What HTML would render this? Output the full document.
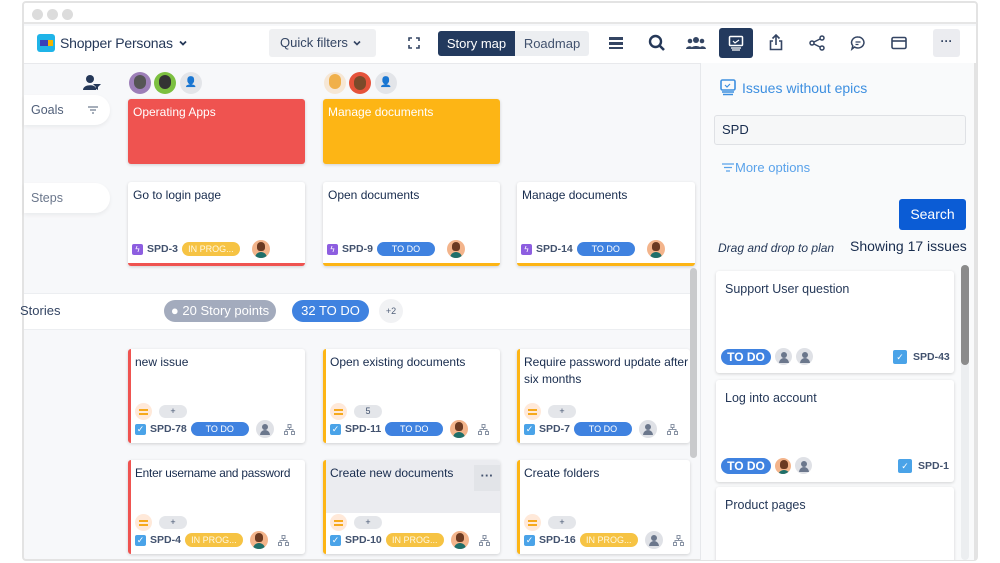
<!DOCTYPE html>
<html><head><meta charset="utf-8"><style>
*{box-sizing:border-box;margin:0;padding:0}
html,body{width:1000px;height:563px;overflow:hidden}
body{background:#fff;font-family:"Liberation Sans",sans-serif;position:relative;color:#172b4d}
.a{position:absolute}
.win{left:22px;top:1px;width:956px;height:560px;border:2px solid #e3e3e3;border-radius:4px;background:#f7f8fa;overflow:hidden}
.card{position:absolute;background:#fff;border-radius:3px;box-shadow:0 1px 3px rgba(0,0,0,.16)}
.t{position:absolute;left:5px;top:7px;font-size:12px;color:#172b4d;line-height:17px;white-space:nowrap}
.pill{display:inline-block;height:14px;border-radius:7px;color:#fff;font-size:9px;line-height:14px;text-align:center}
.todo{background:#3f82e0;width:58px}
.prog{background:#f6c343;color:#fff8e0;width:58px}
.id{font-size:10.5px;font-weight:bold;color:#42526e}
.cb{display:inline-block;width:11px;height:11px;background:#4aa3e8;border-radius:2px;color:#fff;font-size:9px;line-height:11px;text-align:center;vertical-align:middle}
.row{position:absolute;left:5px;display:flex;align-items:center;gap:4px}
.pri{width:17px;height:17px;border-radius:50%;background:#ffe9d9;position:relative}
.pri:before,.pri:after{content:"";position:absolute;left:4px;width:9px;height:2px;background:#f6a91c}
.pri:before{top:6px}.pri:after{top:10px}
.plus{width:28px;height:13px;border-radius:7px;background:#e4e6ea;font-size:9px;text-align:center;line-height:13px;color:#42526e;margin-left:3px}
.av{width:18px;height:18px;border-radius:50%;background:#f3b48b;position:relative;overflow:hidden}
.av:before{content:"";position:absolute;left:5px;top:2px;width:8px;height:9px;border-radius:4px 4px 3px 3px;background:#6b3a22}
.av:after{content:"";position:absolute;left:3px;top:12px;width:12px;height:8px;border-radius:6px 6px 0 0;background:#1f6f6a}
.ua{width:18px;height:18px;border-radius:50%;background:#dfe1e6;position:relative}
.ua:before{content:"";position:absolute;left:6px;top:4px;width:6px;height:6px;border-radius:50%;background:#6b778c}
.ua:after{content:"";position:absolute;left:4px;top:10px;width:10px;height:5px;border-radius:5px 5px 0 0;background:#6b778c}
</style></head><body>
<svg width="0" height="0" style="position:absolute"><defs><symbol id="tr" viewBox="0 0 11 11"><rect x="4" y="0.5" width="3" height="3" fill="none" stroke="#8993a4"/><rect x="0.5" y="7.5" width="3" height="3" fill="none" stroke="#8993a4"/><rect x="7.5" y="7.5" width="3" height="3" fill="none" stroke="#8993a4"/><path d="M5.5 3.5v2M2 7.5v-2h7v2" stroke="#8993a4" fill="none"/></symbol></defs></svg>
<div class="a win">
 <div class="a" style="left:0;top:0;width:956px;height:21px;background:#fff;border-bottom:2px solid #e6e6e6"></div>
 <div class="a" style="left:8px;top:6px;width:11px;height:11px;border-radius:50%;background:#dcdcdc"></div>
 <div class="a" style="left:23px;top:6px;width:11px;height:11px;border-radius:50%;background:#dcdcdc"></div>
 <div class="a" style="left:38px;top:6px;width:11px;height:11px;border-radius:50%;background:#dcdcdc"></div>
 <div class="a" style="left:0;top:23px;width:956px;height:38px;background:#fff;border-bottom:1px solid #e8e9ec"></div>
</div>
<div class="a" style="left:37px;top:34px;width:18px;height:18px;border-radius:3px;background:#1fb4e8"></div>
<div class="a" style="left:40px;top:40px;width:8px;height:6px;background:#3a3fb8"></div>
<div class="a" style="left:48px;top:40px;width:5px;height:6px;background:#f4b400"></div>
<div class="a" style="left:60px;top:35px;font-size:14px;color:#253858;letter-spacing:-0.2px">Shopper Personas</div>
<svg class="a" style="left:178px;top:38px" width="10" height="10" viewBox="0 0 10 10"><path d="M2 3.5L5 6.5 8 3.5" stroke="#253858" stroke-width="1.8" fill="none"/></svg>
<div class="a" style="left:269px;top:29px;width:107px;height:28px;background:#eff0f2;border-radius:3px;font-size:13px;color:#344563;line-height:28px;padding-left:11px">Quick filters</div>
<svg class="a" style="left:352px;top:38px" width="10" height="10" viewBox="0 0 10 10"><path d="M2 3.5L5 6.5 8 3.5" stroke="#344563" stroke-width="1.6" fill="none"/></svg>
<svg class="a" style="left:408px;top:37px" width="12" height="12" viewBox="0 0 12 12"><path d="M1 4V1h3M8 1h3v3M11 8v3H8M4 11H1V8" stroke="#344563" stroke-width="1.6" fill="none"/></svg>
<div class="a" style="left:438px;top:31px;width:77px;height:25px;background:#233a5e;border-radius:3px 0 0 3px;color:#fff;font-size:13px;line-height:25px;text-align:center">Story map</div>
<div class="a" style="left:515px;top:31px;width:74px;height:25px;background:#eceef1;border-radius:0 3px 3px 0;color:#42526e;font-size:13px;line-height:25px;text-align:center">Roadmap</div>
<svg class="a" style="left:608px;top:35px" width="16" height="16" viewBox="0 0 16 16"><rect x="1" y="2" width="14" height="3" fill="#344563"/><rect x="1" y="7" width="14" height="3" fill="#344563"/><rect x="1" y="12" width="14" height="2" fill="#344563"/></svg>
<svg class="a" style="left:648px;top:34px" width="18" height="18" viewBox="0 0 18 18"><circle cx="7.5" cy="7.5" r="5.5" stroke="#253858" stroke-width="2.4" fill="none"/><path d="M11.5 11.5L16 16" stroke="#253858" stroke-width="2.6"/></svg>
<svg class="a" style="left:686px;top:36px" width="20" height="14" viewBox="0 0 20 14"><circle cx="10" cy="4" r="3" fill="#344563"/><circle cx="4" cy="5" r="2.3" fill="#344563"/><circle cx="16" cy="5" r="2.3" fill="#344563"/><path d="M5 13c0-4 10-4 10 0z" fill="#344563"/><path d="M0 13c0-3 6-4 6-1v1zM20 13c0-3-6-4-6-1v1z" fill="#344563"/></svg>
<div class="a" style="left:719px;top:28px;width:34px;height:30px;background:#233a5e;border-radius:3px"></div>
<svg class="a" style="left:728px;top:35px" width="16" height="16" viewBox="0 0 16 16"><rect x="1.5" y="1.5" width="13" height="9" rx="1" stroke="#fff" stroke-width="1.5" fill="none"/><path d="M5 6l2 2 4-3" stroke="#fff" stroke-width="1.2" fill="none"/><path d="M3 13h10M4 15h8" stroke="#fff" stroke-width="1.3"/></svg>
<svg class="a" style="left:769px;top:34px" width="14" height="17" viewBox="0 0 14 17"><path d="M7 1v10M3.5 4.5L7 1l3.5 3.5" stroke="#344563" stroke-width="1.6" fill="none"/><path d="M4 7H1.5v8.5h11V7H10" stroke="#344563" stroke-width="1.6" fill="none"/></svg>
<svg class="a" style="left:809px;top:35px" width="16" height="16" viewBox="0 0 16 16"><circle cx="3" cy="8" r="2" fill="none" stroke="#344563" stroke-width="1.5"/><circle cx="13" cy="3" r="2" fill="none" stroke="#344563" stroke-width="1.5"/><circle cx="13" cy="13" r="2" fill="none" stroke="#344563" stroke-width="1.5"/><path d="M5 7l6-3M5 9l6 3" stroke="#344563" stroke-width="1.5"/></svg>
<svg class="a" style="left:850px;top:35px" width="16" height="16" viewBox="0 0 16 16"><path d="M8 2a6 5.5 0 1 1-3.5 10L2 14l.8-3.2A6 5.5 0 0 1 8 2z" stroke="#344563" stroke-width="1.5" fill="none"/><path d="M5.5 7h5M5.5 9.5h3" stroke="#344563" stroke-width="1.3"/></svg>
<svg class="a" style="left:891px;top:36px" width="16" height="14" viewBox="0 0 16 14"><rect x="1" y="1.5" width="14" height="11" rx="1.5" stroke="#344563" stroke-width="1.6" fill="none"/><path d="M1 5h14" stroke="#344563" stroke-width="1.6"/></svg>
<div class="a" style="left:933px;top:29px;width:27px;height:28px;background:#ebecf0;border-radius:3px;font-size:12px;line-height:24px;text-align:center;color:#344563;font-weight:bold">···</div>

<svg class="a" style="left:82px;top:74px" width="20" height="18" viewBox="0 0 20 18"><circle cx="8" cy="5" r="4" fill="#253858"/><path d="M1 16c0-6 12-6 13-2v2z" fill="#253858"/><path d="M11 10h8l-3 3v3l-2-1v-2z" fill="#253858"/></svg>
<div class="a" style="left:24px;top:95px;width:86px;height:30px;background:#fff;border-radius:0 15px 15px 0;box-shadow:0 2px 4px rgba(0,0,0,.06)"></div>
<div class="a" style="left:31px;top:103px;font-size:12.5px;color:#505f79">Goals</div>
<svg class="a" style="left:87px;top:105px" width="12" height="10" viewBox="0 0 12 10"><path d="M1 2h10M3 5h6M5 8h2" stroke="#8993a4" stroke-width="1.4"/></svg>
<div class="a" style="left:24px;top:183px;width:86px;height:30px;background:#fff;border-radius:0 15px 15px 0;box-shadow:0 2px 4px rgba(0,0,0,.06)"></div>
<div class="a" style="left:31px;top:191px;font-size:12.5px;color:#6b778c">Steps</div>

<div class="a" style="left:129px;top:72px;width:22px;height:22px;border-radius:50%;background:#9d7fb8"></div>
<div class="a" style="left:134px;top:75px;width:12px;height:14px;border-radius:6px;background:#555"></div>
<div class="a" style="left:154px;top:72px;width:22px;height:22px;border-radius:50%;background:#7cc040"></div>
<div class="a" style="left:159px;top:75px;width:12px;height:14px;border-radius:6px;background:#333"></div>
<div class="a" style="left:180px;top:72px;width:22px;height:22px;border-radius:50%;background:#e3e5e9;color:#42526e;font-size:10px;line-height:22px;text-align:center">👤</div>
<div class="a" style="left:324px;top:72px;width:22px;height:22px;border-radius:50%;background:#f6e7d5"></div>
<div class="a" style="left:329px;top:74px;width:12px;height:15px;border-radius:6px;background:#f0b04a"></div>
<div class="a" style="left:349px;top:72px;width:22px;height:22px;border-radius:50%;background:#e5533b"></div>
<div class="a" style="left:354px;top:76px;width:12px;height:14px;border-radius:6px;background:#7a4a2a"></div>
<div class="a" style="left:375px;top:72px;width:22px;height:22px;border-radius:50%;background:#e3e5e9;color:#42526e;font-size:10px;line-height:22px;text-align:center">👤</div>

<div class="card" style="left:128px;top:99px;width:177px;height:65px;background:#ef5350"><div class="t" style="color:#fff;top:5px">Operating Apps</div></div>
<div class="card" style="left:323px;top:99px;width:177px;height:65px;background:#fdb515"><div class="t" style="color:#fff;top:5px">Manage documents</div></div>

<div class="card" style="left:128px;top:182px;width:177px;height:84px;border-bottom:3px solid #ef5350"><div class="t" style="top:5px">Go to login page</div>
 <div class="row" style="bottom:5px;left:4px"><span class="ep" style="display:inline-block;width:11px;height:11px;background:#8d5ee0;border-radius:2px;color:#fff;font-size:8px;line-height:11px;text-align:center">ϟ</span><span class="id">SPD-3</span><span class="pill prog">IN PROG...</span><span class="av" style="margin-left:8px"></span></div></div>
<div class="card" style="left:323px;top:182px;width:177px;height:84px;border-bottom:3px solid #fdb515"><div class="t" style="top:5px">Open documents</div>
 <div class="row" style="bottom:5px;left:4px"><span style="display:inline-block;width:11px;height:11px;background:#8d5ee0;border-radius:2px;color:#fff;font-size:8px;line-height:11px;text-align:center">ϟ</span><span class="id">SPD-9</span><span class="pill todo">TO DO</span><span class="av" style="margin-left:8px"></span></div></div>
<div class="card" style="left:517px;top:182px;width:178px;height:84px;border-bottom:3px solid #fdb515"><div class="t" style="top:5px">Manage documents</div>
 <div class="row" style="bottom:5px;left:4px"><span style="display:inline-block;width:11px;height:11px;background:#8d5ee0;border-radius:2px;color:#fff;font-size:8px;line-height:11px;text-align:center">ϟ</span><span class="id">SPD-14</span><span class="pill todo">TO DO</span><span class="av" style="margin-left:8px"></span></div></div>

<div class="a" style="left:24px;top:293px;width:666px;height:37px;background:#fff;border-top:1px solid #eceef1;border-bottom:1px solid #eceef1"></div>
<div class="a" style="left:20px;top:303px;font-size:13px;color:#344563">Stories</div>
<div class="a" style="left:164px;top:300px;width:112px;height:22px;border-radius:11px;background:#a3abbd;color:#fff;font-size:13px;line-height:22px;text-align:center">● 20 Story points</div>
<div class="a" style="left:292px;top:300px;width:77px;height:22px;border-radius:11px;background:#3f82e0;color:#fff;font-size:13px;line-height:22px;text-align:center">32 TO DO</div>
<div class="a" style="left:379px;top:299px;width:24px;height:24px;border-radius:50%;background:#f1f2f4;color:#505f79;font-size:9px;line-height:24px;text-align:center">+2</div>

<div class="card" style="left:128px;top:349px;width:177px;height:94px;border-left:3px solid #ef5350"><div class="t" style="left:4px;top:5px">new issue</div>
 <div class="row" style="bottom:23px;left:4px"><span class="pri"></span><span class="plus">+</span></div>
 <div class="row" style="bottom:5px;left:4px"><span class="cb">✓</span><span class="id">SPD-78</span><span class="pill todo">TO DO</span><span class="ua" style="margin-left:3px"></span><svg width="11" height="11" style="margin-left:6px"><use href="#tr"/></svg></div></div>
<div class="card" style="left:323px;top:349px;width:177px;height:94px;border-left:3px solid #fdb515"><div class="t" style="left:4px;top:5px">Open existing documents</div>
 <div class="row" style="bottom:23px;left:4px"><span class="pri"></span><span class="plus">5</span></div>
 <div class="row" style="bottom:5px;left:4px"><span class="cb">✓</span><span class="id">SPD-11</span><span class="pill todo">TO DO</span><span class="av" style="margin-left:3px"></span><svg width="11" height="11" style="margin-left:6px"><use href="#tr"/></svg></div></div>
<div class="card" style="left:517px;top:349px;width:173px;height:94px;border-left:3px solid #fdb515;overflow:hidden"><div class="t" style="left:4px;top:5px">Require password update after<br>six months</div>
 <div class="row" style="bottom:23px;left:4px"><span class="pri"></span><span class="plus">+</span></div>
 <div class="row" style="bottom:5px;left:4px"><span class="cb">✓</span><span class="id">SPD-7</span><span class="pill todo">TO DO</span><span class="ua" style="margin-left:3px"></span><svg width="11" height="11" style="margin-left:6px"><use href="#tr"/></svg></div></div>

<div class="card" style="left:128px;top:460px;width:177px;height:94px;border-left:3px solid #ef5350"><div class="t" style="left:4px;top:5px;font-size:11.8px;letter-spacing:-0.2px">Enter username and password</div>
 <div class="row" style="bottom:23px;left:4px"><span class="pri"></span><span class="plus">+</span></div>
 <div class="row" style="bottom:5px;left:4px"><span class="cb">✓</span><span class="id">SPD-4</span><span class="pill prog">IN PROG...</span><span class="av" style="margin-left:3px"></span><svg width="11" height="11" style="margin-left:6px"><use href="#tr"/></svg></div></div>
<div class="card" style="left:323px;top:460px;width:177px;height:94px;border-left:3px solid #fdb515;overflow:hidden"><div class="a" style="left:0;top:0;width:174px;height:53px;background:#ebecf0"></div><div class="t" style="left:4px;top:5px">Create new documents</div>
 <div class="a" style="left:148px;top:5px;width:26px;height:26px;background:#e2e4e8;font-size:13px;font-weight:bold;color:#42526e;text-align:center;line-height:22px">···</div>
 <div class="row" style="bottom:23px;left:4px"><span class="pri"></span><span class="plus">+</span></div>
 <div class="row" style="bottom:5px;left:4px"><span class="cb">✓</span><span class="id">SPD-10</span><span class="pill prog">IN PROG...</span><span class="av" style="margin-left:3px"></span><svg width="11" height="11" style="margin-left:6px"><use href="#tr"/></svg></div></div>
<div class="card" style="left:517px;top:460px;width:173px;height:94px;border-left:3px solid #fdb515"><div class="t" style="left:4px;top:5px">Create folders</div>
 <div class="row" style="bottom:23px;left:4px"><span class="pri"></span><span class="plus">+</span></div>
 <div class="row" style="bottom:5px;left:4px"><span class="cb">✓</span><span class="id">SPD-16</span><span class="pill prog">IN PROG...</span><span class="ua" style="margin-left:3px"></span><svg width="11" height="11" style="margin-left:6px"><use href="#tr"/></svg></div></div>

<div class="a" style="left:690px;top:268px;width:7px;height:190px;border-radius:4px;background:#c9cacc"></div>

<div class="a" style="left:700px;top:63px;width:276px;height:497px;background:#f9fafb;border-left:1px solid #e6e8eb;border-right:2px solid #e3e3e3;overflow:hidden">
 <svg class="a" style="left:19px;top:16px" width="16" height="17" viewBox="0 0 16 17"><rect x="1" y="1" width="14" height="10" rx="1.5" stroke="#3d8fe0" stroke-width="1.6" fill="none"/><path d="M5 6l2 2 3-3" stroke="#3d8fe0" stroke-width="1.2" fill="none"/><path d="M2 13h12M3 15.5h10" stroke="#3d8fe0" stroke-width="1.5"/></svg>
 <div class="a" style="left:41px;top:17px;font-size:14px;color:#3d8fe0">Issues without epics</div>
 <div class="a" style="left:13px;top:52px;width:252px;height:30px;background:#f6f7f8;border:1px solid #dfe1e5;border-radius:3px;font-size:13px;color:#172b4d;line-height:28px;padding-left:7px">SPD</div>
 <svg class="a" style="left:21px;top:100px" width="12" height="9" viewBox="0 0 12 9"><path d="M0 1h12M2 4.5h8M4 8h4" stroke="#5aa2ea" stroke-width="1.3"/></svg>
 <div class="a" style="left:34px;top:97px;font-size:13px;color:#5aa2ea">More options</div>
 <div class="a" style="left:198px;top:136px;width:67px;height:31px;background:#0b5cd5;border-radius:3px;color:#fff;font-size:14px;line-height:31px;text-align:center">Search</div>
 <div class="a" style="left:17px;top:178px;font-size:12px;font-style:italic;color:#253858">Drag and drop to plan</div>
 <div class="a" style="left:149px;top:175px;font-size:14px;color:#172b4d">Showing 17 issues</div>
 <div class="card" style="left:15px;top:208px;width:238px;height:102px"><div class="t" style="left:9px;top:10px;font-size:12.5px;color:#253858">Support User question</div>
  <div class="row" style="left:5px;bottom:8px"><span class="pill" style="background:#3f82e0;width:50px;height:16px;line-height:16px;font-size:12px;font-weight:bold;border-radius:8px">TO DO</span><span class="ua" style="width:17px;height:17px"></span><span class="ua" style="width:17px;height:17px"></span></div>
  <div class="row" style="left:177px;bottom:9px"><span class="cb" style="width:14px;height:14px;line-height:14px">✓</span><span class="id" style="margin-left:2px">SPD-43</span></div></div>
 <div class="card" style="left:15px;top:317px;width:238px;height:102px"><div class="t" style="left:9px;top:10px;font-size:12.5px;color:#253858">Log into account</div>
  <div class="row" style="left:5px;bottom:8px"><span class="pill" style="background:#3f82e0;width:50px;height:16px;line-height:16px;font-size:12px;font-weight:bold;border-radius:8px">TO DO</span><span class="av" style="width:16px;height:16px"></span><span class="ua" style="width:17px;height:17px"></span></div>
  <div class="row" style="left:182px;bottom:9px"><span class="cb" style="width:14px;height:14px;line-height:14px">✓</span><span class="id" style="margin-left:2px">SPD-1</span></div></div>
 <div class="card" style="left:15px;top:424px;width:238px;height:90px"><div class="t" style="left:9px;top:10px;font-size:12.5px;color:#253858">Product pages</div></div>
 <div class="a" style="left:260px;top:202px;width:8px;height:295px;background:#eceef0;border-radius:4px"></div>
 <div class="a" style="left:260px;top:202px;width:8px;height:100px;background:#8b8b8b;border-radius:4px"></div>
</div>
</body></html>
